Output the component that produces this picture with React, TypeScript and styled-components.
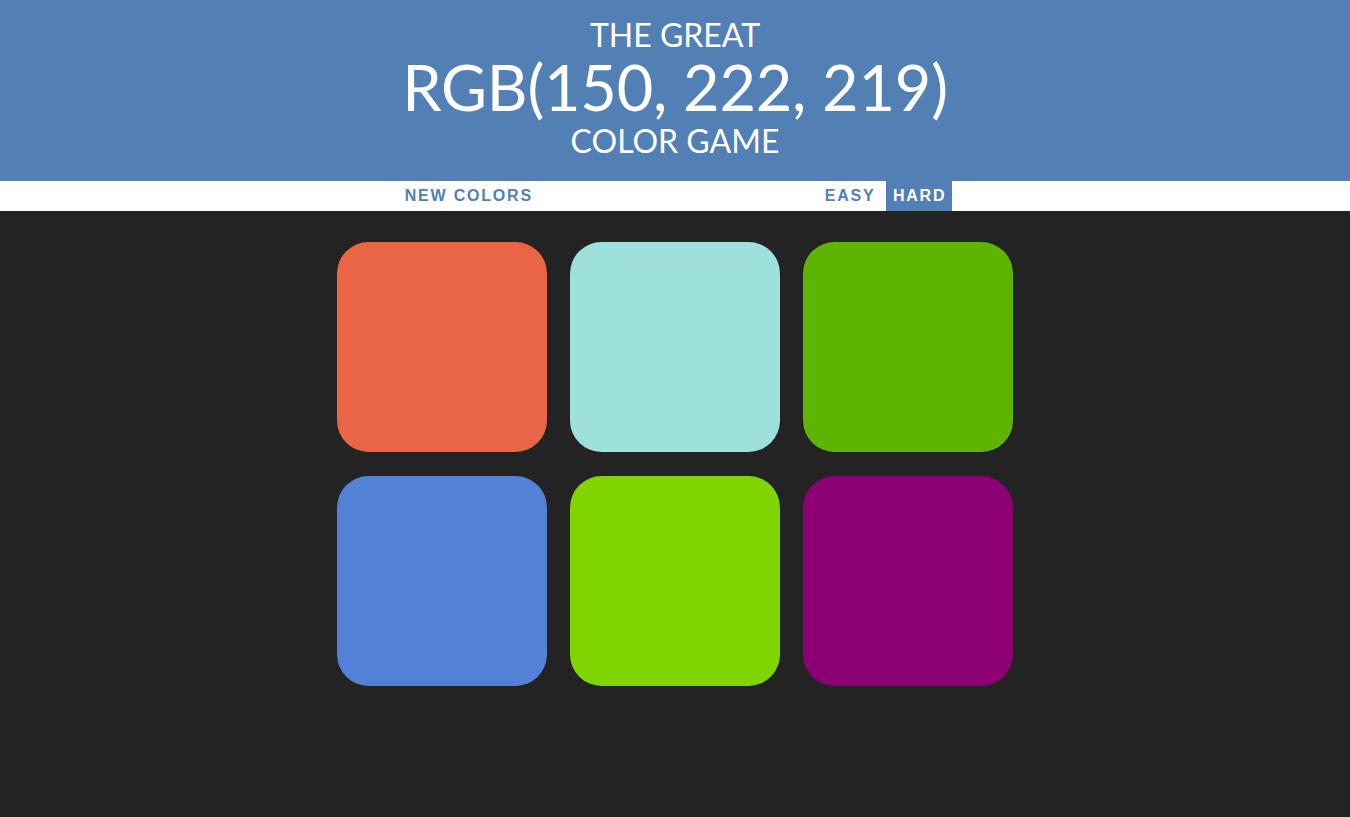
import React, { useState } from "react";
import styled, { createGlobalStyle, css } from "styled-components";

const GlobalStyle = createGlobalStyle`
  html, body {
    margin: 0;
    padding: 0;
    background: #232323;
  }
  body {
    font-family: "Liberation Sans", Arial, sans-serif;
  }
`;

const Title = styled.h1`
  margin: 0;
  padding: 17px 0 23px;
  background: #527fb4;
  color: #ffffff;
  text-align: center;
  text-transform: uppercase;
  font-family: Lato, "Open Sans", sans-serif;
  font-weight: 400;
  font-size: 32px;
  line-height: 1.1;
`;

const TitleLine = styled.span`
  display: block;
`;

const ColorDisplay = styled.span`
  display: block;
  font-size: 63px;
  line-height: 70.4px;
  letter-spacing: -0.2px;
`;

const Stripe = styled.div`
  height: 30px;
  background: #ffffff;
  display: flex;
  justify-content: center;
  align-items: stretch;
  gap: 4.4px;
`;

const StripeButton = styled.button<{ $active?: boolean }>`
  border: none;
  margin: 0;
  padding: 0 6px 0 7px;
  height: 100%;
  background: none;
  font-family: "Liberation Sans", Arial, sans-serif;
  font-size: 16px;
  font-weight: 700;
  letter-spacing: 1.8px;
  text-transform: uppercase;
  color: #527fb4;
  cursor: pointer;
  outline: none;
  ${(p) =>
    p.$active &&
    css`
      background: #527fb4;
      color: #ffffff;
    `}
`;

const Message = styled.span`
  display: inline-block;
  width: 20%;
`;

const Board = styled.div`
  max-width: 700px;
  margin: 20px auto;
  display: flex;
  flex-wrap: wrap;
`;

const Square = styled.div`
  width: 30%;
  padding-bottom: 30%;
  margin: 1.66%;
  border-radius: 15%;
`;

const colors = [
  "rgb(233, 101, 69)",
  "rgb(158, 224, 220)",
  "rgb(95, 180, 0)",
  "rgb(83, 129, 214)",
  "rgb(128, 213, 0)",
  "rgb(140, 0, 116)",
];

export default function App() {
  const [hard, setHard] = useState(true);
  return (
    <>
      <GlobalStyle />
      <Title>
        <TitleLine>The Great</TitleLine>
        <ColorDisplay>RGB(150, 222, 219)</ColorDisplay>
        <TitleLine>Color Game</TitleLine>
      </Title>
      <Stripe>
        <StripeButton>New Colors</StripeButton>
        <Message />
        <StripeButton $active={!hard} onClick={() => setHard(false)}>
          Easy
        </StripeButton>
        <StripeButton $active={hard} onClick={() => setHard(true)}>
          Hard
        </StripeButton>
      </Stripe>
      <Board>
        {colors.map((c) => (
          <Square key={c} style={{ background: c }} />
        ))}
      </Board>
    </>
  );
}
